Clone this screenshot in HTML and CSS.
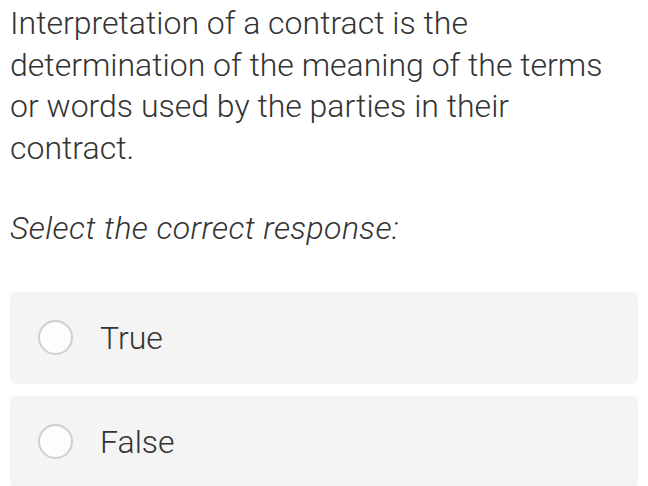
FILE: index.html
```html
<!DOCTYPE html>
<html lang="en">
<head>
<meta charset="UTF-8">
<meta name="viewport" content="width=device-width,initial-scale=1">
<title>Question</title>
<link rel="stylesheet" href="styles.css">
</head>
<body>
<div class="quiz">
  <p class="stem">Interpretation of a contract is the determination of the meaning of the terms or words used by the parties in their contract.</p>

  <p class="prompt">Select the correct response:</p>

  <div class="options">
    <label class="opt"><span class="radio"></span><span class="txt">True</span></label>
    <label class="opt"><span class="radio"></span><span class="txt">False</span></label>
  </div>
</div>
</body>
</html>
```

FILE: styles.css
```css
*{box-sizing:border-box;margin:0;padding:0}
body{background:#fff;color:#333;font-family:Roboto,"Noto Sans",sans-serif;font-weight:300;padding:0 10px}
.stem{font-size:32px;line-height:41.5px;padding-top:3px}
.prompt{font-size:32px;line-height:41.5px;font-style:italic;letter-spacing:.4px;margin-top:39px}
.options{margin-top:42px;display:flex;flex-direction:column;gap:12px}
.opt{display:flex;align-items:center;gap:27px;background:#f4f4f4;border-radius:6px;height:92px;padding-left:28px;font-size:32px}
.radio{width:35px;height:35px;border-radius:50%;border:2px solid #cfcfcf;background:#fdfdfd}
```
